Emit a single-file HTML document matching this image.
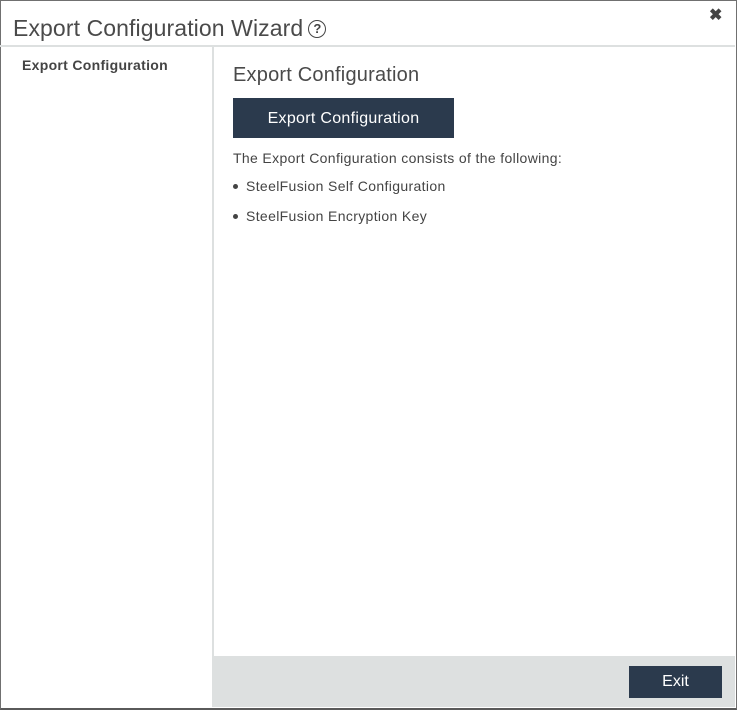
<!DOCTYPE html>
<html><head><style>
body{margin:0;width:737px;height:710px;overflow:hidden;background:#fff;font-family:"Liberation Sans",sans-serif;}
.box{position:absolute;left:0;top:0;width:735px;border:1px solid #707070;border-bottom:2px solid #5a5a5a;height:707px;background:#fff;}
.title{position:absolute;left:13px;top:15px;font-size:23px;color:#4a4a4a;letter-spacing:0.1px;}
.q{display:inline-block;width:16px;height:16px;border:1.6px solid #444;border-radius:50%;font-size:13px;line-height:16px;text-align:center;vertical-align:3px;margin-left:5px;font-weight:bold;color:#444;letter-spacing:0;}
.x{position:absolute;left:709px;top:5px;font-size:16px;font-weight:bold;color:#444;}
.hl{position:absolute;left:0;top:45px;width:735px;height:2px;background:#dde0e0;}
.vl{position:absolute;left:212px;top:47px;width:2px;height:660px;background:#dde0e0;}
.side{position:absolute;left:22px;top:57px;font-size:14px;font-weight:bold;color:#444;letter-spacing:0.3px;}
.h2{position:absolute;left:233px;top:64px;font-size:20px;color:#4a4a4a;letter-spacing:0.2px;}
.btn{position:absolute;left:233px;top:98px;width:221px;height:40px;background:#2b3a4d;color:#fff;font-size:16px;line-height:42px;text-align:center;letter-spacing:0.3px;}
.t{position:absolute;left:233px;font-size:14px;color:#444;letter-spacing:0.35px;}
.b{position:absolute;left:233px;width:5px;height:5px;border-radius:50%;background:#444;}
.foot{position:absolute;left:214px;top:656px;width:521px;height:51px;background:#dde0e0;}
.exit{position:absolute;left:629px;top:666px;width:93px;height:32px;background:#2b3a4d;color:#fff;font-size:16px;line-height:32px;text-align:center;}
</style></head><body>
<div class="box"></div>
<div class="title">Export Configuration Wizard<span class="q">?</span></div>
<div class="x">✖</div>
<div class="hl"></div>
<div class="vl"></div>
<div class="side">Export Configuration</div>
<div class="h2">Export Configuration</div>
<div class="btn">Export Configuration</div>
<div class="t" style="top:150px">The Export Configuration consists of the following:</div>
<div class="b" style="top:184px"></div>
<div class="t" style="top:178px;left:246px">SteelFusion Self Configuration</div>
<div class="b" style="top:214px"></div>
<div class="t" style="top:208px;left:246px">SteelFusion Encryption Key</div>
<div class="foot"></div>
<div class="exit">Exit</div>
</body></html>
